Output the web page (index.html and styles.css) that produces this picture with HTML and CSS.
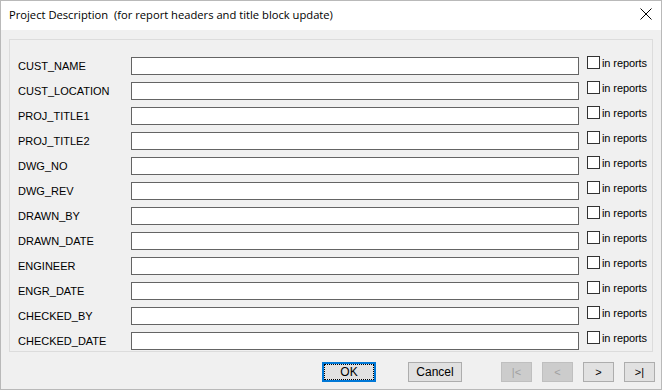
FILE: index.html
```html
<!doctype html>
<html lang="en">
<head>
    <meta charset="utf-8">
    <title>Project Description</title>
    <link rel="stylesheet" href="styles.css">
</head>
<body>
<div class="window">
    <div class="titlebar">
        <span class="title">Project Description&nbsp; (for report headers and title block update)</span>
        <svg class="close" width="12" height="12" viewBox="0 0 12 12">
            <path d="M0.5 0.5 L11.5 11.5 M11.5 0.5 L0.5 11.5" stroke="#000" stroke-width="1" fill="none"></path>
        </svg>
    </div>
    <div class="content">
        <div class="group">
            <div class="field-row">
                <label>CUST_NAME</label><input type="text">
                <span class="check"><span class="box"></span>in reports</span>
            </div>
            <div class="field-row">
                <label>CUST_LOCATION</label><input type="text">
                <span class="check"><span class="box"></span>in reports</span>
            </div>
            <div class="field-row">
                <label>PROJ_TITLE1</label><input type="text">
                <span class="check"><span class="box"></span>in reports</span>
            </div>
            <div class="field-row">
                <label>PROJ_TITLE2</label><input type="text">
                <span class="check"><span class="box"></span>in reports</span>
            </div>
            <div class="field-row">
                <label>DWG_NO</label><input type="text">
                <span class="check"><span class="box"></span>in reports</span>
            </div>
            <div class="field-row">
                <label>DWG_REV</label><input type="text">
                <span class="check"><span class="box"></span>in reports</span>
            </div>
            <div class="field-row">
                <label>DRAWN_BY</label><input type="text">
                <span class="check"><span class="box"></span>in reports</span>
            </div>
            <div class="field-row">
                <label>DRAWN_DATE</label><input type="text">
                <span class="check"><span class="box"></span>in reports</span>
            </div>
            <div class="field-row">
                <label>ENGINEER</label><input type="text">
                <span class="check"><span class="box"></span>in reports</span>
            </div>
            <div class="field-row">
                <label>ENGR_DATE</label><input type="text">
                <span class="check"><span class="box"></span>in reports</span>
            </div>
            <div class="field-row">
                <label>CHECKED_BY</label><input type="text">
                <span class="check"><span class="box"></span>in reports</span>
            </div>
            <div class="field-row">
                <label>CHECKED_DATE</label><input type="text">
                <span class="check"><span class="box"></span>in reports</span>
            </div>
        </div>
        <div class="buttons">
            <button class="btn default"><span>OK</span></button>
            <button class="btn cancel">Cancel</button>
            <div class="nav">
                <button class="btn nav-btn disabled">|&lt;</button>
                <button class="btn nav-btn disabled">&lt;</button>
                <button class="btn nav-btn">&gt;</button>
                <button class="btn nav-btn">&gt;|</button>
            </div>
        </div>
    </div>
</div>
</body>
</html>
```

FILE: styles.css
```css
body {
    margin: 0;
    font-family: "Liberation Sans", Arial, sans-serif;
    font-size: 11px;
    color: #000;
}

.window {
    width: 662px;
    height: 390px;
    box-sizing: border-box;
    border: 1px solid #b9b9b9;
    display: flex;
    flex-direction: column;
    background-color: #f0f0f0;
}

.titlebar {
    height: 29px;
    background-color: #ffffff;
    display: flex;
    align-items: center;
    justify-content: space-between;
    padding: 0 9px 0 8px;
}

.title {
    font-family: "Open Sans", "Noto Sans", sans-serif;
    font-size: 11.2px;
    margin-top: -2px;
}

.close {
    margin-top: -3px;
}

.content {
    flex: 1;
    display: flex;
    flex-direction: column;
    padding: 9px 0 0 8px;
}

.group {
    width: 644px;
    height: 313px;
    box-sizing: border-box;
    border: 1px solid #dcdcdc;
    padding: 17px 0 0 8px;
    display: flex;
    flex-direction: column;
    gap: 7px;
}

.field-row {
    display: grid;
    grid-template-columns: 105px 448px auto;
    column-gap: 8px;
    align-items: center;
    height: 18px;
}

.field-row label {
    white-space: nowrap;
}

.field-row input {
    box-sizing: border-box;
    width: 448px;
    height: 18px;
    margin: 0;
    border: 1px solid #646464;
    background-color: #fff;
    padding: 0 2px;
    font: inherit;
}

.check {
    align-self: start;
    margin-top: -1px;
    display: flex;
    align-items: center;
    gap: 2px;
    font-size: 11px;
    letter-spacing: -0.1px;
    white-space: nowrap;
}

.check .box {
    width: 11px;
    height: 11px;
    border: 1px solid #333;
    background-color: #fff;
}

.buttons {
    display: flex;
    padding: 10px 0 0 313px;
}

.btn {
    box-sizing: border-box;
    height: 20px;
    margin: 0;
    padding: 0;
    font-family: "Liberation Sans", Arial, sans-serif;
    font-size: 12px;
    color: #000;
    background-color: #e1e1e1;
    border: 1px solid #adadad;
}

.default {
    width: 54px;
    border: 2px solid #0078d7;
    padding: 0;
}

.default span {
    display: block;
    margin: 0;
    height: 14px;
    line-height: 14px;
    border: 1px dotted #000;
}

.cancel {
    width: 54px;
    margin-left: 32px;
}

.nav {
    display: flex;
    gap: 10px;
    margin-left: 39px;
}

.nav-btn {
    width: 31px;
    font-size: 11px;
}

.nav-btn.disabled {
    background-color: #cccccc;
    border-color: #bfbfbf;
    color: #a0a0a0;
}
```
